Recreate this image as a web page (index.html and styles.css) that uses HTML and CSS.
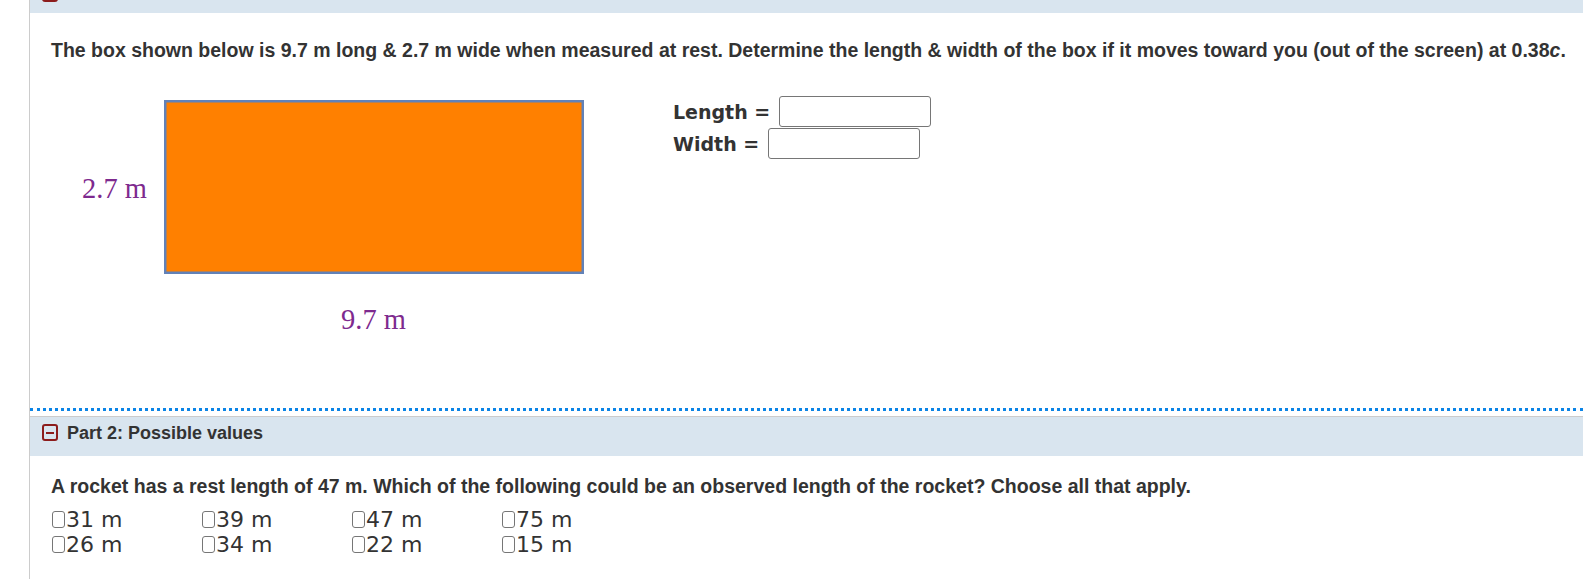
FILE: index.html
```html
<!DOCTYPE html>
<html lang="en">
<head>
  <meta charset="UTF-8" />
  <title>Length contraction</title>
  <link rel="stylesheet" href="styles.css">
</head>
<body>
  <div class="page">
    <!-- Part 1 header (scrolled mostly out of view) -->
    <div class="part-head part-head-top">
      <span class="toggle"></span>
    </div>

    <div class="part-body part-one">
      <p class="question">The box shown below is 9.7 m long &amp; 2.7 m wide when measured at rest. Determine the length &amp; width of the box if it moves toward you (out of the screen) at 0.38<i>c</i>.</p>

      <div class="problem-row">
        <svg class="diagram" width="566" height="260" viewBox="0 0 566 260">
          <rect x="114.25" y="11.25" width="417.5" height="171.5" fill="#ff8000" stroke="#6282b8" stroke-width="2.5" />
          <text x="31" y="108" class="dim">2.7 m</text>
          <text x="290" y="239" class="dim">9.7 m</text>
        </svg>

        <div class="answers">
          <label class="answer-row">Length =&nbsp;<input type="text" class="answer-input" /></label>
          <label class="answer-row">Width =&nbsp;<input type="text" class="answer-input" /></label>
        </div>
      </div>
    </div>

    <div class="part-divider"></div>

    <!-- Part 2 -->
    <div class="part-head">
      <span class="toggle"></span>
      <span class="part-title">Part 2: Possible values</span>
    </div>

    <div class="part-body part-two">
      <p class="question">A rocket has a rest length of 47 m. Which of the following could be an observed length of the rocket? Choose all that apply.</p>
      <div class="choices">
        <label class="choice"><input type="checkbox" class="box" />31 m</label>
        <label class="choice"><input type="checkbox" class="box" />39 m</label>
        <label class="choice"><input type="checkbox" class="box" />47 m</label>
        <label class="choice"><input type="checkbox" class="box" />75 m</label>
        <label class="choice"><input type="checkbox" class="box" />26 m</label>
        <label class="choice"><input type="checkbox" class="box" />34 m</label>
        <label class="choice"><input type="checkbox" class="box" />22 m</label>
        <label class="choice"><input type="checkbox" class="box" />15 m</label>
      </div>
    </div>
  </div>
</body>
</html>
```

FILE: styles.css
```css
* {
  margin: 0;
  padding: 0;
  box-sizing: border-box;
}

body {
  background-color: #fff;
  color: #333;
  font-family: 'Liberation Sans', Arial, sans-serif;
  height: 579px;
  overflow: hidden;
}

.page {
  margin-left: 29px;
  border-left: 1px solid #ccc;
  min-height: 579px;
}

.part-head {
  background-color: #d9e5ef;
  border-top: 1px solid #ccc;
  height: 40px;
  display: flex;
  align-items: flex-start;
  padding: 6px 0 0 12px;
}

/* only the bottom of the first header is still on screen */
.part-head-top {
  border-top: none;
  height: 13px;
  padding-top: 0;
  overflow: hidden;
}
.part-head-top .toggle {
  margin-top: -15px;
}

.toggle {
  width: 16px;
  height: 17px;
  margin-top: 1px;
  border: 2px solid #8c1c1c;
  border-radius: 3px;
  display: flex;
  justify-content: center;
  align-items: center;
  flex-shrink: 0;
}
.toggle::before {
  content: '';
  width: 8px;
  height: 2px;
  background-color: #8c1c1c;
}

.part-title {
  font-weight: bold;
  font-size: 18px;
  line-height: 20px;
  margin-left: 9px;
}

.part-body {
  padding-left: 21px;
}

.question {
  font-weight: bold;
  font-size: 19.5px;
  line-height: 22px;
}

.part-one {
  padding-top: 26px;
  height: 395px;
}

.problem-row {
  display: flex;
  margin-top: 29px;
}

.diagram {
  display: block;
  flex-shrink: 0;
}

.dim {
  font-family: 'Liberation Serif', 'DejaVu Serif', serif;
  font-size: 28.5px;
  fill: #7e2a8e;
}

.answers {
  display: flex;
  flex-direction: column;
  align-items: flex-start;
  margin-left: 56px;
  margin-top: 6px;
  gap: 1px;
}

.answer-row {
  display: flex;
  align-items: center;
  font-family: 'DejaVu Sans', Verdana, sans-serif;
  font-weight: bold;
  font-size: 19px;
}

.answer-input {
  width: 152px;
  height: 31px;
  margin-left: 2px;
  border: 1px solid #767676;
  border-radius: 3px;
  background: #fff;
}

.part-divider {
  border-top: 3px dotted #0b84e6;
  margin-bottom: 5px;
}

.part-two {
  padding-top: 19px;
}

.choices {
  display: grid;
  grid-template-columns: repeat(4, 150px);
  margin-top: 10px;
}

.choice {
  display: flex;
  align-items: center;
  height: 25px;
  font-family: 'DejaVu Sans', Verdana, sans-serif;
  font-size: 22px;
}

.box {
  appearance: none;
  width: 13px;
  height: 17px;
  border: 1px solid #767676;
  border-radius: 3px;
  background: #fff;
  margin: 0 1px 0 1px;
}
```
